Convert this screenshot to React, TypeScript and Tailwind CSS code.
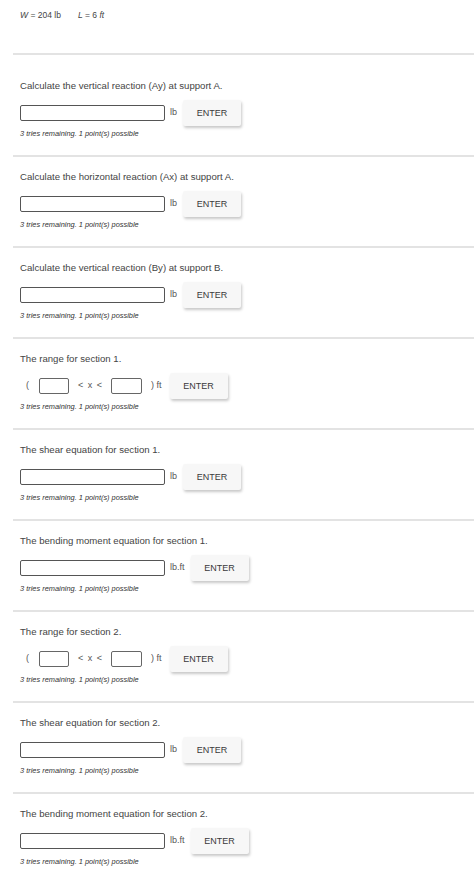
const font = { fontFamily: '"Liberation Sans", Arial, sans-serif' };

type Section = {
  label: string;
  unit: string;
  range?: boolean;
};

const sections: Section[] = [
  { label: "Calculate the vertical reaction (Ay) at support A.", unit: "lb" },
  { label: "Calculate the horizontal reaction (Ax) at support A.", unit: "lb" },
  { label: "Calculate the vertical reaction (By) at support B.", unit: "lb" },
  { label: "The range for section 1.", unit: "ft", range: true },
  { label: "The shear equation for section 1.", unit: "lb" },
  { label: "The bending moment equation for section 1.", unit: "lb.ft" },
  { label: "The range for section 2.", unit: "ft", range: true },
  { label: "The shear equation for section 2.", unit: "lb" },
  { label: "The bending moment equation for section 2.", unit: "lb.ft" },
];

function EnterButton({ className = "" }: { className?: string }) {
  return (
    <button
      className={`h-[26px] w-[58px] rounded-[2px] bg-[#f7f7f7] text-[9px] leading-none text-[#3a3a3a] shadow-[1px_2px_3px_rgba(0,0,0,0.22)] ${className}`}
    >
      ENTER
    </button>
  );
}

function Question({ s, first }: { s: Section; first: boolean }) {
  return (
    <div className={`border-t-2 border-[#e3e3e3] pb-[16px] ${first ? "pt-[25px]" : "pt-[14px]"}`}>
      <div className="pl-[7px] text-[9.6px] leading-[12px] text-[#444]">{s.label}</div>
      <div className="mt-[8px] flex h-[26px] items-center pl-[7px]">
        {s.range ? (
          <>
            <span className="ml-[6px] text-[9px] text-[#555]">(</span>
            <input className="ml-[10px] h-[16px] w-[30px] rounded-[2px] border border-[#666] bg-white" />
            <span className="ml-[9px] text-[9px] tracking-[1px] text-[#555]">{"<  x <"}</span>
            <input className="ml-[8px] h-[16px] w-[31px] rounded-[2px] border border-[#666] bg-white" />
            <span className="ml-[9px] text-[9px] text-[#555]">) ft</span>
            <EnterButton className="ml-[8px]" />
          </>
        ) : (
          <>
            <input className="h-[16px] w-[145px] rounded-[2px] border border-[#555] bg-white" />
            <span className="ml-[5px] text-[9px] text-[#555]">{s.unit}</span>
            <EnterButton className="ml-[6px]" />
          </>
        )}
      </div>
      <div className="mt-[3px] pl-[7px] text-[7.4px] italic leading-[10px] text-[#333]">
        3 tries remaining. 1 point(s) possible
      </div>
    </div>
  );
}

export default function App() {
  return (
    <div className="min-h-[883px] w-[474px] bg-white" style={font}>
      <div className="h-[53px] pl-[20px] pt-[9px] text-[8.5px] leading-[12px] text-[#444]">
        <span>
          <i>W</i> = 204 lb
        </span>
        <span className="ml-[17px]">
          <i>L</i> = 6 <i>ft</i>
        </span>
      </div>
      <div className="ml-[13px]">
        {sections.map((s, i) => (
          <Question key={i} s={s} first={i === 0} />
        ))}
      </div>
    </div>
  );
}
